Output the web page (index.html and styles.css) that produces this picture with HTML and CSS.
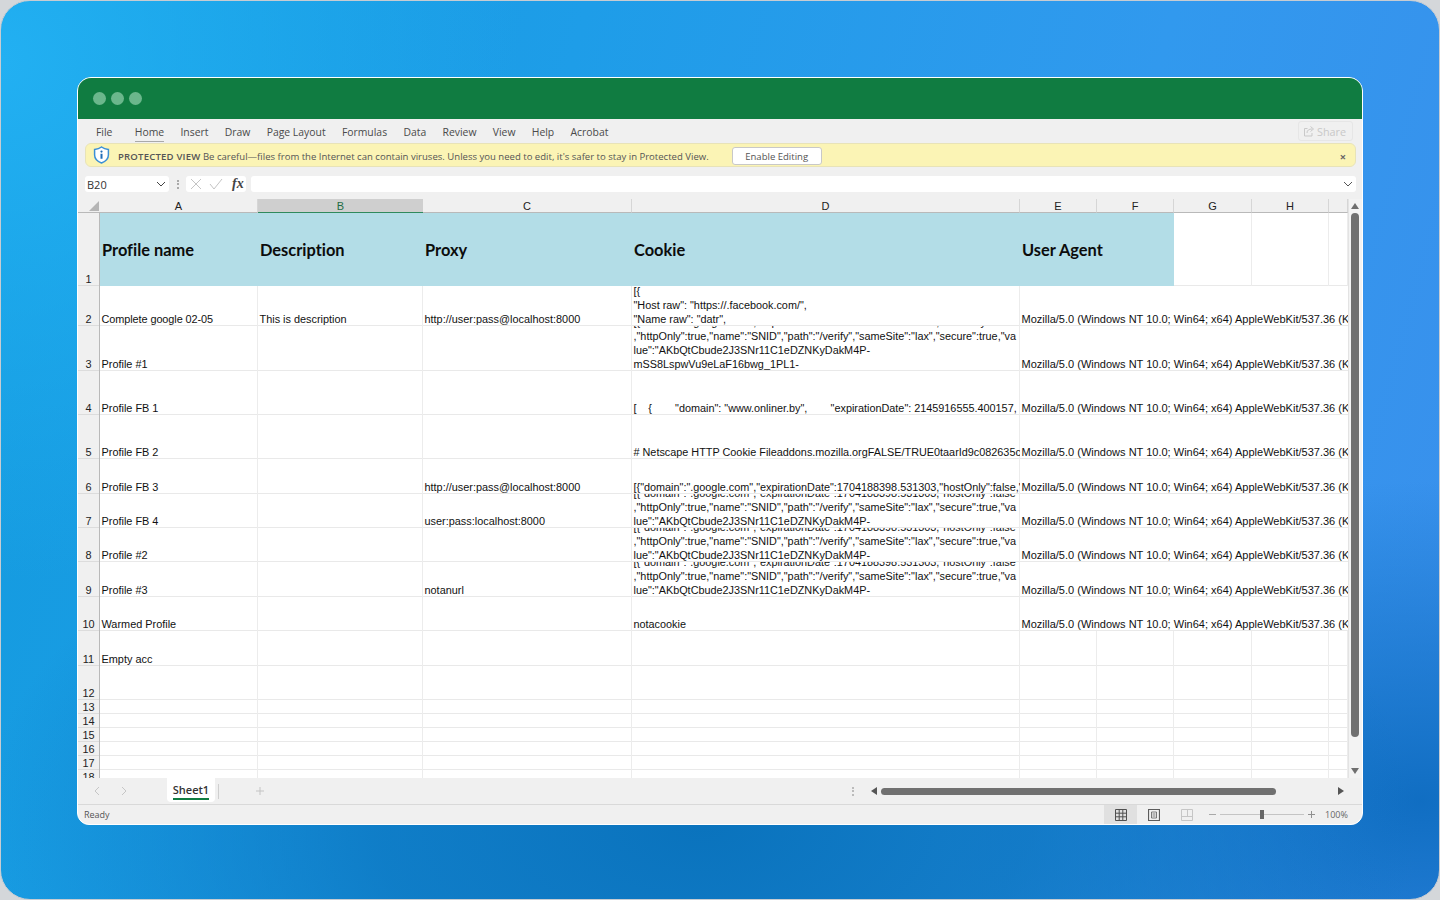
FILE: index.html
```html
<!DOCTYPE html>
<html lang="en">
<head>
<meta charset="utf-8">
<title>Sheet1 - Excel</title>
<link rel="stylesheet" href="styles.css">
</head>
<body>
<div class="desktop">
<main class="window">
  <header class="titlebar"><i class="dot"></i><i class="dot"></i><i class="dot"></i></header>
  <nav class="menu">
    <span class="m-file">File</span><span class="m-home">Home</span><span>Insert</span><span>Draw</span><span>Page Layout</span><span>Formulas</span><span>Data</span><span>Review</span><span>View</span><span>Help</span><span>Acrobat</span>
    <span class="share"><svg width="12" height="12" viewBox="0 0 12 12" fill="none" stroke="#c9c9c9"><path d="M4.5 3.5H1.5v7.5h7.5V8"/><path d="M4 8c0-2.8 2-4 5-4"/><path d="M7.5 1.5 10.5 4 7.5 6.5"/></svg>Share</span>
  </nav>
  <section class="notice">
    <svg class="shield" width="17" height="18" viewBox="0 0 17 18"><path d="M8.5 1C6.500 2.600 4.200 3.300 1.600 3.400V9c0 3.700 2.600 6.300 6.900 8 4.300-1.700 6.900-4.300 6.900-8V3.400C12.800 3.300 10.500 2.600 8.500 1z" fill="#fff" stroke="#3a8fd6" stroke-width="1.500"/><circle cx="8.500" cy="5.600" r="1.100" fill="#1f6db8"/><path d="M8.500 7.800v5" stroke="#1f6db8" stroke-width="2"/></svg>
    <span class="notice-text"><b>PROTECTED VIEW</b> Be careful—files from the Internet can contain viruses. Unless you need to edit, it's safer to stay in Protected View.</span>
    <button class="enable">Enable Editing</button>
    <span class="close">×</span>
  </section>
  <section class="formula">
    <div class="namebox"><span>B20</span><svg width="10" height="6" viewBox="0 0 10 6" fill="none" stroke="#444"><path d="M1 1l4 4 4-4"/></svg></div>
    <span class="grip"></span>
    <div class="fxbox">
      <svg width="14" height="14" viewBox="0 0 14 14" fill="none" stroke="#c4c4c4"><path d="M2 2l10 10M12 2L2 12"/></svg>
      <svg width="14" height="14" viewBox="0 0 14 14" fill="none" stroke="#c4c4c4"><path d="M1 7l4 5 8-10"/></svg>
      <span class="fx">fx</span>
    </div>
    <div class="input"><svg width="10" height="6" viewBox="0 0 10 6" fill="none" stroke="#555"><path d="M1 1l4 4 4-4"/></svg></div>
  </section>
  <section class="sheetwrap">
    <div class="sheet">
      <div class="ch corner"></div><div class="ch">A</div><div class="ch sel">B</div><div class="ch">C</div><div class="ch">D</div><div class="ch">E</div><div class="ch">F</div><div class="ch">G</div><div class="ch">H</div><div class="ch"></div>

      <div class="rh">1</div><div class="c hd">Profile name</div><div class="c hd">Description</div><div class="c hd">Proxy</div><div class="c hd">Cookie</div><div class="c hd s2">User Agent</div><div class="c"></div><div class="c"></div><div class="c"></div>

      <div class="rh">2</div><div class="c tight">Complete google 02-05</div><div class="c">This is description</div><div class="c">http://user:pass@localhost:8000</div>
      <div class="c d"><span>[{</span><span>"Host raw": "https://.facebook.com/",</span><span>"Name raw": "datr",</span></div><div class="c ua">Mozilla/5.0 (Windows NT 10.0; Win64; x64) AppleWebKit/537.36 (KHTML, like Gecko) Chrome/120.0.0.0 Safari/537.36</div>

      <div class="rh">3</div><div class="c">Profile #1</div><div class="c"></div><div class="c"></div>
      <div class="c d"><span>[{"domain":".google.com","expirationDate":1704188398.531303,"hostOnly":false</span><span>,"httpOnly":true,"name":"SNID","path":"/verify","sameSite":"lax","secure":true,"va</span><span>lue":"AKbQtCbude2J3SNr11C1eDZNKyDakM4P-</span><span>mSS8LspwVu9eLaF16bwg_1PL1-</span></div><div class="c ua">Mozilla/5.0 (Windows NT 10.0; Win64; x64) AppleWebKit/537.36 (KHTML, like Gecko) Chrome/120.0.0.0 Safari/537.36</div>

      <div class="rh">4</div><div class="c">Profile FB 1</div><div class="c"></div><div class="c"></div>
      <div class="c d pre"><span>[    {        "domain": "www.onliner.by",        "expirationDate": 2145916555.400157,        "hostOnly": false,</span></div><div class="c ua">Mozilla/5.0 (Windows NT 10.0; Win64; x64) AppleWebKit/537.36 (KHTML, like Gecko) Chrome/120.0.0.0 Safari/537.36</div>

      <div class="rh">5</div><div class="c">Profile FB 2</div><div class="c"></div><div class="c"></div>
      <div class="c d"><span># Netscape HTTP Cookie Fileaddons.mozilla.orgFALSE/TRUE0taarId9c082635c8a14d3b</span></div><div class="c ua">Mozilla/5.0 (Windows NT 10.0; Win64; x64) AppleWebKit/537.36 (KHTML, like Gecko) Chrome/120.0.0.0 Safari/537.36</div>

      <div class="rh">6</div><div class="c">Profile FB 3</div><div class="c"></div><div class="c">http://user:pass@localhost:8000</div>
      <div class="c d"><span>[{"domain":".google.com","expirationDate":1704188398.531303,"hostOnly":false,"httpOnly"</span></div><div class="c ua">Mozilla/5.0 (Windows NT 10.0; Win64; x64) AppleWebKit/537.36 (KHTML, like Gecko) Chrome/120.0.0.0 Safari/537.36</div>

      <div class="rh">7</div><div class="c">Profile FB 4</div><div class="c"></div><div class="c">user:pass:localhost:8000</div>
      <div class="c d"><span>[{"domain":".google.com","expirationDate":1704188398.531303,"hostOnly":false</span><span>,"httpOnly":true,"name":"SNID","path":"/verify","sameSite":"lax","secure":true,"va</span><span>lue":"AKbQtCbude2J3SNr11C1eDZNKyDakM4P-</span></div><div class="c ua">Mozilla/5.0 (Windows NT 10.0; Win64; x64) AppleWebKit/537.36 (KHTML, like Gecko) Chrome/120.0.0.0 Safari/537.36</div>

      <div class="rh">8</div><div class="c">Profile #2</div><div class="c"></div><div class="c"></div>
      <div class="c d"><span>[{"domain":".google.com","expirationDate":1704188398.531303,"hostOnly":false</span><span>,"httpOnly":true,"name":"SNID","path":"/verify","sameSite":"lax","secure":true,"va</span><span>lue":"AKbQtCbude2J3SNr11C1eDZNKyDakM4P-</span></div><div class="c ua">Mozilla/5.0 (Windows NT 10.0; Win64; x64) AppleWebKit/537.36 (KHTML, like Gecko) Chrome/120.0.0.0 Safari/537.36</div>

      <div class="rh">9</div><div class="c">Profile #3</div><div class="c"></div><div class="c">notanurl</div>
      <div class="c d"><span>[{"domain":".google.com","expirationDate":1704188398.531303,"hostOnly":false</span><span>,"httpOnly":true,"name":"SNID","path":"/verify","sameSite":"lax","secure":true,"va</span><span>lue":"AKbQtCbude2J3SNr11C1eDZNKyDakM4P-</span></div><div class="c ua">Mozilla/5.0 (Windows NT 10.0; Win64; x64) AppleWebKit/537.36 (KHTML, like Gecko) Chrome/120.0.0.0 Safari/537.36</div>

      <div class="rh">10</div><div class="c">Warmed Profile</div><div class="c"></div><div class="c"></div>
      <div class="c d"><span>notacookie</span></div><div class="c ua">Mozilla/5.0 (Windows NT 10.0; Win64; x64) AppleWebKit/537.36 (KHTML, like Gecko) Chrome/120.0.0.0 Safari/537.36</div>

      <div class="rh">11</div><div class="c">Empty acc</div><div class="c"></div><div class="c"></div><div class="c"></div><div class="c"></div><div class="c"></div><div class="c"></div><div class="c"></div><div class="c"></div>
      <div class="rh">12</div><div class="c"></div><div class="c"></div><div class="c"></div><div class="c"></div><div class="c"></div><div class="c"></div><div class="c"></div><div class="c"></div><div class="c"></div>
      <div class="rh">13</div><div class="c"></div><div class="c"></div><div class="c"></div><div class="c"></div><div class="c"></div><div class="c"></div><div class="c"></div><div class="c"></div><div class="c"></div>
      <div class="rh">14</div><div class="c"></div><div class="c"></div><div class="c"></div><div class="c"></div><div class="c"></div><div class="c"></div><div class="c"></div><div class="c"></div><div class="c"></div>
      <div class="rh">15</div><div class="c"></div><div class="c"></div><div class="c"></div><div class="c"></div><div class="c"></div><div class="c"></div><div class="c"></div><div class="c"></div><div class="c"></div>
      <div class="rh">16</div><div class="c"></div><div class="c"></div><div class="c"></div><div class="c"></div><div class="c"></div><div class="c"></div><div class="c"></div><div class="c"></div><div class="c"></div>
      <div class="rh">17</div><div class="c"></div><div class="c"></div><div class="c"></div><div class="c"></div><div class="c"></div><div class="c"></div><div class="c"></div><div class="c"></div><div class="c"></div>
      <div class="rh">18</div><div class="c"></div><div class="c"></div><div class="c"></div><div class="c"></div><div class="c"></div><div class="c"></div><div class="c"></div><div class="c"></div><div class="c"></div>
    </div>
    <div class="vscroll"><i class="tri-up"></i><i class="vthumb"></i><i class="tri-down"></i></div>
  </section>
  <section class="tabs">
    <svg class="nav" width="8" height="10" viewBox="0 0 8 10" fill="none" stroke="#c6c6c6"><path d="M6 1L2 5l4 4"/></svg>
    <svg class="nav next" width="8" height="10" viewBox="0 0 8 10" fill="none" stroke="#c6c6c6"><path d="M2 1l4 4-4 4"/></svg>
    <div class="tab"><span>Sheet1</span></div>
    <i class="tabsep"></i>
    <svg class="plus" width="10" height="10" viewBox="0 0 10 10" stroke="#c4c4c4"><path d="M5 1v8M1 5h8"/></svg>
    <i class="hgrip"></i>
    <i class="tri-left"></i>
    <div class="htrack"><i class="hthumb"></i></div>
    <i class="tri-right"></i>
  </section>
  <footer class="status">
    <span class="ready">Ready</span>
    <div class="view on"><svg width="12" height="12" viewBox="0 0 12 12" fill="none" stroke="#505050"><path d="M.5.500h11v11H.500zM4.200.500v11M7.800.500v11M.500 4.200h11M.500 7.800h11"/></svg></div>
    <div class="view"><svg width="12" height="12" viewBox="0 0 12 12" fill="none" stroke="#5c5c5c"><path d="M.500.500h11v11H.500z" stroke-width="1.200"/><path d="M3.500 3h5v6h-5zM4.500 5h3M4.500 7h3" stroke-width=".8"/></svg></div>
    <div class="view"><svg width="12" height="12" viewBox="0 0 12 12" fill="none" stroke="#c6c6c6"><path d="M.500.500h11v11H.500zM.500 7.500h11M6.500.500v7"/></svg></div>
    <div class="zoom">
      <svg width="7" height="7" viewBox="0 0 7 7" stroke="#a8a8a8"><path d="M0 3.500h7"/></svg>
      <div class="slider"><i></i></div>
      <svg width="7" height="7" viewBox="0 0 7 7" stroke="#909090"><path d="M0 3.500h7M3.500 0v7"/></svg>
      <span>100%</span>
    </div>
  </footer>
</main>
</div>
</body>
</html>
```
FILE: styles.css
```css
* { box-sizing: border-box; }
html, body { margin: 0; height: 100%; background: #d4d7da; }
i { display: block; }
.desktop {
  width: 1440px; height: 900px; overflow: hidden;
  border-radius: 30px; border: 1px solid #c7ccd2;
  padding: 76px;
  background:
    radial-gradient(ellipse 720px 400px at 700px 825px, #0a73bd 0%, rgba(10,115,189,.75) 45%, rgba(10,115,189,0) 100%),
    radial-gradient(ellipse 480px 320px at 1420px 800px, rgba(14,108,192,.95) 0%, rgba(14,108,192,0) 100%),
    radial-gradient(ellipse 520px 520px at 0 60px, #22b0f2 0%, rgba(34,176,242,0) 100%),
    linear-gradient(105deg, #139bde 0%, #1e9de8 35%, #3199ee 70%, #3a8fec 100%);
}
.window {
  width: 1286px; height: 748px; border: 1px solid #fff; border-radius: 14px 14px 12px 12px; overflow: hidden;
  background: #f0f0f0; display: flex; flex-direction: column;
  font-family: "Open Sans", "Noto Sans", sans-serif; color: #444;
}
.titlebar { height: 41px; flex: none; background: #107c41; display: flex; align-items: center; gap: 5px; padding: 0 0 1px 15px; }
.dot { width: 13px; height: 13px; border-radius: 50%; background: #6bb78c; }
.menu { height: 24px; flex: none; display: flex; align-items: center; gap: 16.300px; padding: 1px 9px 0 18px; font-size: 10.400px; color: #4a4a4a; }
.m-file { margin-right: 6px; }
.m-home { position: relative; }
.m-home::after { content: ""; position: absolute; left: 0; right: 0; bottom: -3px; height: 1px; background: #a9a9a9; }
.share { margin-left: auto; width: 55px; height: 20px; margin-top: -1px; padding-right: 2px; border: 1px solid #e6e6e6; border-radius: 3px; display: flex; align-items: center; justify-content: center; gap: 2px; color: #c8c8c8; font-size: 10.800px; }
.notice { height: 24px; flex: none; margin: 0 6px 0 7px; display: flex; align-items: center; padding: 2px 0 0 7px; background: #fbf4b5; border: 1px solid #e8e3b8; border-radius: 6px; font-size: 9.550px; color: #555; }
.shield { flex: none; margin-top: -2px; }
.notice-text { margin-left: 8px; white-space: nowrap; }
.notice-text b { font-weight: 600; letter-spacing: .2px; }
.enable { margin-left: 23px; width: 90px; height: 18px; padding: 0; background: #fff; border: 1px solid #c8c8c8; border-radius: 3px; font: inherit; color: #555; }
.close { margin-left: auto; margin-right: 9px; font-size: 11px; font-weight: 700; color: #666; line-height: 1; }
.formula { height: 16px; flex: none; margin: 9px 6px 7px 7px; display: flex; align-items: stretch; font-size: 11px; }
.namebox { width: 84px; background: #fff; border-radius: 3px; display: flex; align-items: center; justify-content: space-between; padding: 0 3px 0 2px; color: #333; font-family: "Open Sans", sans-serif; }
.grip { width: 3px; margin: 4px 6px 3px 8px; border-left: 2px dotted #aaa; }
.fxbox { width: 60px; background: #fff; border-radius: 3px; display: flex; align-items: center; gap: 6px; padding-left: 3px; }
.fx { font: italic 700 14px "Liberation Serif", serif; color: #444; margin-left: 3px; }
.input { flex: 1; margin-left: 5px; background: #fff; border-radius: 3px; display: flex; align-items: center; justify-content: flex-end; padding-right: 3px; }
.sheetwrap { flex: none; height: 579px; display: flex; }
.sheet {
  flex: none; width: 1270px; height: 579px; overflow: hidden; display: grid; background: #fff;
  grid-template-columns: 22px 158px 165px 209px 388px 77px 77px 78px 77px 19px;
  grid-template-rows: 14px 73px 40px 45px 44px 44px 34.500px 34.500px 34px 35px 34px 35px 34px 13.500px 14px 14px 14px 14px 14px;
  font: 10.900px/14px "Liberation Sans", Arial, sans-serif; color: #111;
}
.ch { background: #f0f0f0; border-bottom: 1px solid #b9b9b9; border-right: 1px solid #d6d6d6; text-align: center; font-size: 11px; line-height: 14px; color: #222; }
.ch.corner { position: relative; border-right: 0; }
.ch.corner::after { content: ""; position: absolute; right: 1px; bottom: 1px; border: 5.500px solid #b5b5b5; border-top-color: transparent; border-left-color: transparent; }
.ch.sel { background: #cfcfcf; color: #1f6b43; border-right: 0; border-bottom: 1px solid #2f8a5d; }
.rh { background: #f0f0f0; box-shadow: inset -1px 0 #b9b9b9, inset 0 -1px #dcdcdc; padding-right: 1px; display: flex; align-items: flex-end; justify-content: center; color: #222; }
.c { min-width: 0; overflow: hidden; white-space: nowrap; box-shadow: inset -1px 0 #ececec, inset 0 -1px #e9e9e9; padding: 0 0 0 1.500px; display: flex; flex-direction: column; justify-content: flex-end; }
.tight { letter-spacing: -.08px; }
.hd { background: #b3dde7; justify-content: center; font: 700 16.400px/22px Lato, "Noto Sans", sans-serif; font-variant-ligatures: none; color: #0c0c0c; box-shadow: none; padding-left: 2px; }
.s2 { grid-column: span 2; }
.d { padding-left: 1.500px; font-size: 10.850px; }
.d span { display: block; flex: none; }
.pre span { white-space: pre; word-spacing: -.1px; }
.ua { grid-column: span 5; box-shadow: inset 0 -1px #e9e9e9; padding-left: 1.500px; font-size: 11.030px; }
.vscroll { flex: 1; position: relative; background: #f3f3f3; border-left: 1px solid #e3e3e3; }
.vthumb { position: absolute; left: 2px; top: 14px; width: 8px; height: 524px; border-radius: 4px; background: #707070; }
.tri-up, .tri-down { position: absolute; left: 2px; width: 0; height: 0; border-left: 4px solid transparent; border-right: 4px solid transparent; }
.tri-up { top: 4px; border-bottom: 6px solid #6f6f6f; }
.tri-down { bottom: 4px; border-top: 6px solid #6f6f6f; }
.tabs { height: 27px; flex: none; display: flex; align-items: center; border-bottom: 1px solid #d9d9d9; font-size: 11.500px; }
.nav { margin-left: 15px; flex: none; }
.nav.next { margin-left: 19px; }
.tab { margin-left: 39px; width: 48px; height: 24px; align-self: flex-start; background: #fff; border-radius: 0 0 4px 4px; display: flex; align-items: flex-start; justify-content: center; padding-top: 4px; color: #333; }
.tab span { border-bottom: 2px solid #107c41; line-height: 15px; font-weight: 600; font-size: 11px; height: 16px; box-sizing: content-box; }
.tabsep { margin-left: 3px; width: 1px; height: 15px; background: #cfcfcf; }
.plus { margin-left: 36px; flex: none; }
.hgrip { margin-left: 587px; width: 2px; height: 9px; border-left: 2px dotted #bbb; }
.tri-left { margin-left: 17px; width: 0; height: 0; border-top: 4px solid transparent; border-bottom: 4px solid transparent; border-right: 6px solid #555; }
.htrack { margin-left: 4px; width: 452px; height: 7px; }
.hthumb { width: 395px; height: 7px; border-radius: 4px; background: #707070; }
.tri-right { margin-left: 5px; width: 0; height: 0; border-top: 4px solid transparent; border-bottom: 4px solid transparent; border-left: 6px solid #555; }
.status { flex: 1; display: flex; align-items: stretch; padding-left: 6px; font-size: 9px; color: #555; }
.ready { margin-right: auto; align-self: center; }
.view { width: 33px; display: flex; align-items: center; justify-content: center; }
.view.on { background: #e0e0e0; }
.zoom { display: flex; align-items: center; margin-left: 6px; width: 153px; }
.slider { position: relative; width: 84px; height: 1px; margin: 0 4px; background: #c4c4c4; }
.slider i { position: absolute; left: 40px; top: -4px; width: 4px; height: 9px; background: #666; }
.zoom span { margin-left: 10px; color: #666; }
```
